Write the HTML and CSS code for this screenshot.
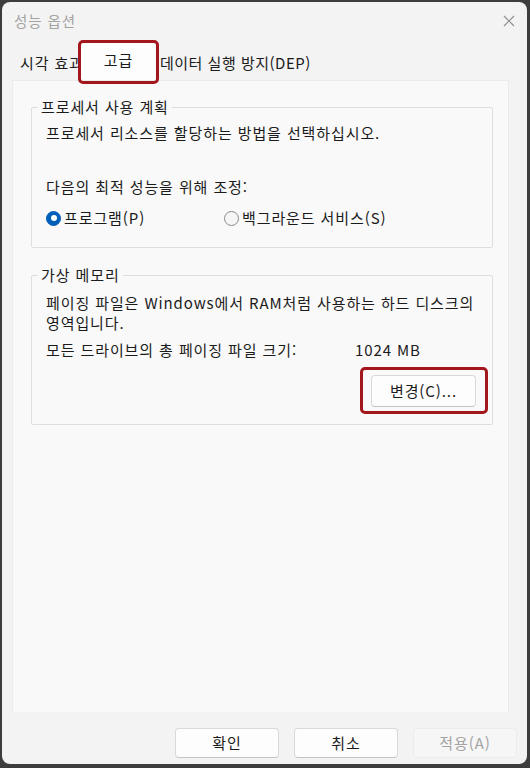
FILE: index.html
```html
<!DOCTYPE html>
<html lang="ko">
<head>
<meta charset="utf-8">
<title>성능 옵션</title>
<link rel="stylesheet" href="styles.css">
</head>
<body>
<div class="window">
  <div class="titlebar">
    <span class="title">성능 옵션</span>
    <svg class="close" width="12" height="12" viewBox="0 0 12 12"><path d="M1 1 L11 11 M11 1 L1 11" stroke="#8f8f8f" stroke-width="1.2" fill="none"/></svg>
  </div>
  <div class="tabs">
    <div class="tab tab-first">시각 효과</div>
    <div class="tab tab-selected mark-tab">고급</div>
    <div class="tab tab-last">데이터 실행 방지(DEP)</div>
  </div>
  <div class="panel">
    <fieldset class="group group-cpu">
      <legend>프로세서 사용 계획</legend>
      <div class="line first">프로세서 리소스를 할당하는 방법을 선택하십시오.</div>
      <div class="line adjust">다음의 최적 성능을 위해 조정:</div>
      <div class="radios">
        <div class="radio radio-one"><span class="dot checked"></span><span>프로그램(P)</span></div>
        <div class="radio"><span class="dot"></span><span>백그라운드 서비스(S)</span></div>
      </div>
    </fieldset>
    <fieldset class="group group-mem">
      <legend>가상 메모리</legend>
      <div class="para">페이징 파일은 Windows에서 RAM처럼 사용하는 하드 디스크의<br>영역입니다.</div>
      <div class="size-row"><span class="size-label">모든 드라이브의 총 페이징 파일 크기:</span><span>1024 MB</span></div>
      <div class="btn-row">
        <div class="mark-btn"><button class="btn change">변경(C)...</button></div>
      </div>
    </fieldset>
  </div>
  <div class="footer">
    <button class="btn foot">확인</button>
    <button class="btn foot">취소</button>
    <button class="btn foot disabled">적용(A)</button>
  </div>
</div>
</body>
</html>
```

FILE: styles.css
```css
* { box-sizing: border-box; }
html, body { margin: 0; padding: 0; }
body {
  background: #3d3d3d;
  width: 530px;
  height: 768px;
  overflow: hidden;
  font-family: "Noto Sans CJK KR", "Noto Sans", sans-serif;
  font-size: 15px;
  letter-spacing: 0.9px;
  color: #1b1b1b;
}
.window {
  margin: 2px 0 0 2px;
  width: 525px;
  height: 762px;
  background: #f3f3f3;
  border-radius: 8px;
  display: flex;
  flex-direction: column;
}
.titlebar {
  height: 38px;
  display: flex;
  align-items: center;
  justify-content: space-between;
  padding: 0 12px 0 12px;
}
.title { color: #a3a3a3; font-size: 14.5px; line-height: 20px; }
.close { display: block; }
.tabs {
  height: 40px;
  display: flex;
  align-items: flex-end;
  padding-left: 10px;
  position: relative;
}
.tab {
  line-height: 20px;
  height: 38px;
  padding-top: 11px;
  white-space: nowrap;
}
.tab-first { width: 68px; padding-left: 8px; }
.tab-selected {
  width: 77px;
  text-align: center;
  background: #fdfdfd;
  padding-top: 8px;
  border-radius: 4px 4px 0 0;
  position: relative;
}
.tab-last { padding-left: 3px; letter-spacing: 0.5px; }
.mark-tab::after {
  content: "";
  position: absolute;
  left: -2px; right: -2px; top: -2px; bottom: -4px;
  border: 3px solid #a3161c;
  border-radius: 5px;
}
.panel {
  flex: 1;
  margin: 0 18px 0 10px;
  background: #f9f9f9;
  border: 1px solid #ebebeb;
  border-bottom: none;
  padding-top: 16px;
}
.group {
  margin: 0 0 0 18px;
  width: 462px;
  border: 1px solid #dedede;
  border-radius: 2px;
  padding: 0 16px 19px 14px;
}
.group legend {
  padding: 0 3px;
  margin-left: -8px;
  line-height: 20px;
}
.line { line-height: 20px; }
.first { margin-top: 6px; }
.adjust { margin-top: 34px; }
.radios {
  margin-top: 11px;
  display: flex;
  height: 20px;
  align-items: center;
}
.radio { display: flex; align-items: center; gap: 3px; line-height: 20px; }
.radio-one { width: 178px; }
.dot {
  width: 15px; height: 15px;
  border-radius: 50%;
  border: 1px solid #8a8a8a;
  background: #f6f6f6;
  position: relative;
}
.dot.checked { background: #005fb8; border-color: #005fb8; }
.dot.checked::after {
  content: "";
  position: absolute;
  left: 50%; top: 50%;
  width: 6px; height: 6px;
  margin: -3px 0 0 -3px;
  border-radius: 50%;
  background: #ffffff;
}
.group-mem { margin-top: 17px; padding-bottom: 17px; }
.para { margin-top: 8px; line-height: 20px; }
.size-row { margin-top: 7px; display: flex; line-height: 20px; }
.size-label { width: 309px; }
.btn-row { margin-top: 15px; display: flex; justify-content: flex-end; }
.mark-btn { position: relative; }
.mark-btn::after {
  content: "";
  position: absolute;
  left: -11px; right: -12px; top: -8px; bottom: -7px;
  border: 3px solid #a3161c;
  border-radius: 5px;
}
.btn {
  font-family: inherit;
  font-size: 15px;
  letter-spacing: 0.9px;
  color: #1b1b1b;
  background: #fdfdfd;
  border: 1px solid #d9d9d9;
  border-bottom-color: #c4c4c4;
  border-radius: 4px;
  padding: 0;
  line-height: 20px;
}
.change { width: 105px; height: 32px; display: block; }
.footer {
  height: 52px;
  display: flex;
  justify-content: flex-end;
  align-items: flex-start;
  gap: 15px;
  padding: 16px 10px 0 0;
}
.foot { width: 104px; height: 30px; }
.foot.disabled {
  background: #f6f6f6;
  border-color: #ececec;
  color: #a3a3a3;
}
```
